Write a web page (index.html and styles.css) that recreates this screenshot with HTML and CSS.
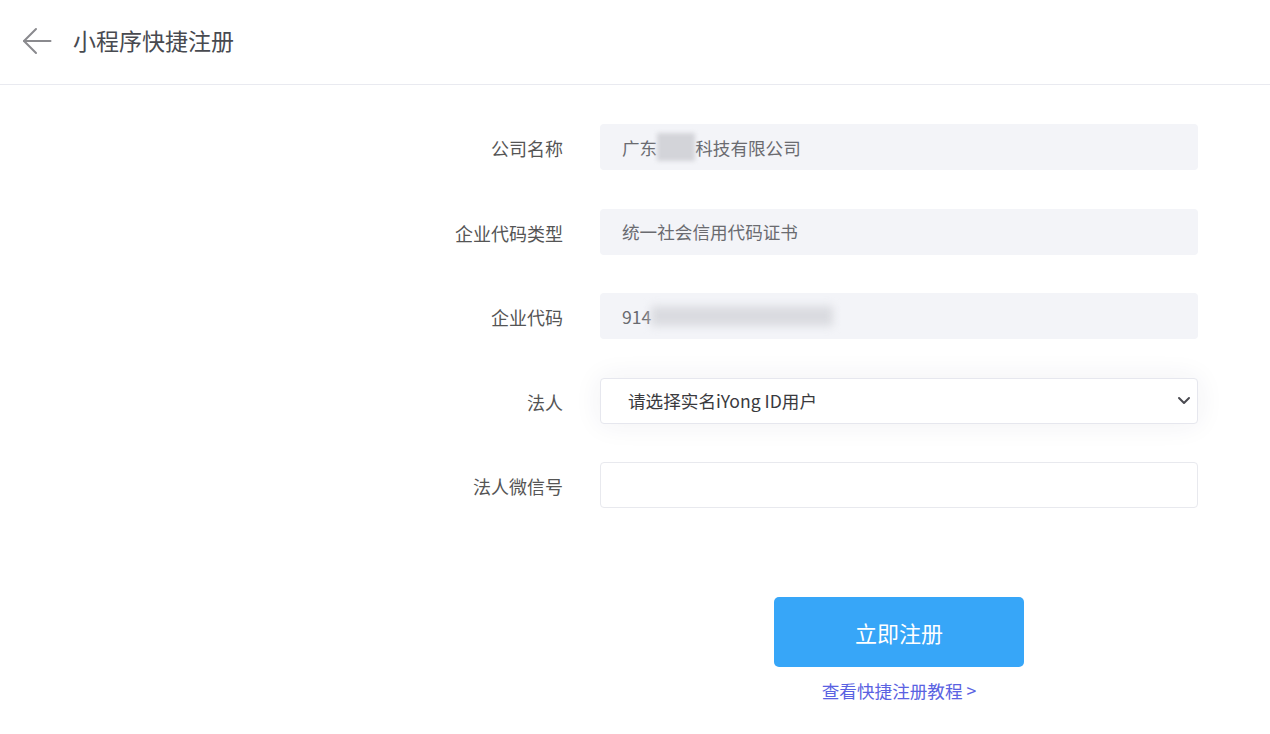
FILE: index.html
```html
<!DOCTYPE html>
<html lang="zh-CN">
<head>
<meta charset="utf-8">
<title>小程序快捷注册</title>
<link rel="stylesheet" href="styles.css">
</head>
<body>
<header class="topbar">
  <span class="back">
    <svg width="30" height="28" viewBox="0 0 30 28" fill="none" stroke="#8a8a8e" stroke-width="2" stroke-linecap="round" stroke-linejoin="round">
      <path d="M28.5 14 H2"/>
      <path d="M14 2 L2 14 L14 26"/>
    </svg>
  </span>
  <h1 class="title">小程序快捷注册</h1>
</header>
<main class="content">
  <div class="form">
    <label class="label">公司名称</label>
    <div class="field readonly">广东<span class="blur blur-name"></span>科技有限公司</div>

    <label class="label">企业代码类型</label>
    <div class="field readonly">统一社会信用代码证书</div>

    <label class="label">企业代码</label>
    <div class="field readonly">914<span class="blur blur-code"></span></div>

    <label class="label">法人</label>
    <div class="field select">
      <span>请选择实名iYong ID用户</span>
      <svg width="14" height="9" viewBox="0 0 14 9" fill="none" stroke="#4a4a50" stroke-width="2" stroke-linecap="round" stroke-linejoin="round"><path d="M2 2 L7 7 L12 2"/></svg>
    </div>

    <label class="label">法人微信号</label>
    <div class="field input"></div>
  </div>
  <div class="actions">
    <button class="submit" type="button">立即注册</button>
    <a class="guide" href="#">查看快捷注册教程&nbsp;&gt;</a>
  </div>
</main>
</body>
</html>
```
FILE: styles.css
```css
* { box-sizing: border-box; }
html, body { margin: 0; padding: 0; background: #fff; }
body {
  font-family: "Noto Sans CJK SC", "Noto Sans", sans-serif;
  color: #555;
}
.topbar {
  height: 85px;
  border-bottom: 1px solid #e9eaf0;
  display: flex;
  align-items: center;
  padding-left: 22px;
  gap: 21px;
}
.back { display: flex; align-items: center; margin-top: -2px; }
.title {
  margin: 0;
  font-size: 23px;
  font-weight: 400;
  color: #484a50;
  line-height: 1;
  margin-top: -3px;
}
.content { padding-top: 39px; }
.form {
  display: grid;
  grid-template-columns: 563px 598px;
  grid-auto-rows: 46px;
  column-gap: 37px;
  row-gap: 38.5px;
}
.label {
  text-align: right;
  font-size: 18px;
  color: #555;
  line-height: 48px;
}
.field {
  height: 46px;
  border-radius: 4px;
  font-size: 17.6px;
  display: flex;
  align-items: center;
}
.readonly {
  background: #f3f4f8;
  color: #6a6b70;
  padding-left: 22px;
}
.blur {
  display: inline-block;
  background: #d3d4d9;
}
.blur-name {
  width: 38px;
  height: 28px;
  filter: blur(2px);
}
.blur-code {
  width: 182px;
  height: 20px;
  background: #dadbe0;
  filter: blur(4px);
}
.select {
  background: #fff;
  border: 1px solid #e6e7ee;
  box-shadow: 0 0 28px rgba(40, 40, 90, 0.07);
  color: #3a3a3e;
  justify-content: space-between;
  padding: 0 6px 0 27px;
}
.input {
  background: #fff;
  border: 1px solid #e8e9ee;
}
.actions {
  margin-left: 600px;
  width: 598px;
  display: flex;
  flex-direction: column;
  align-items: center;
  padding-top: 89px;
}
.submit {
  width: 250px;
  height: 70px;
  border: none;
  border-radius: 5px;
  background: #37a6f8;
  color: #fff;
  font-family: "Noto Sans CJK SC", "Noto Sans", sans-serif;
  font-size: 22px;
  cursor: pointer;
}
.guide {
  margin-top: 12px;
  font-size: 17.6px;
  color: #5a62e2;
  text-decoration: none;
  line-height: 24px;
}
```
